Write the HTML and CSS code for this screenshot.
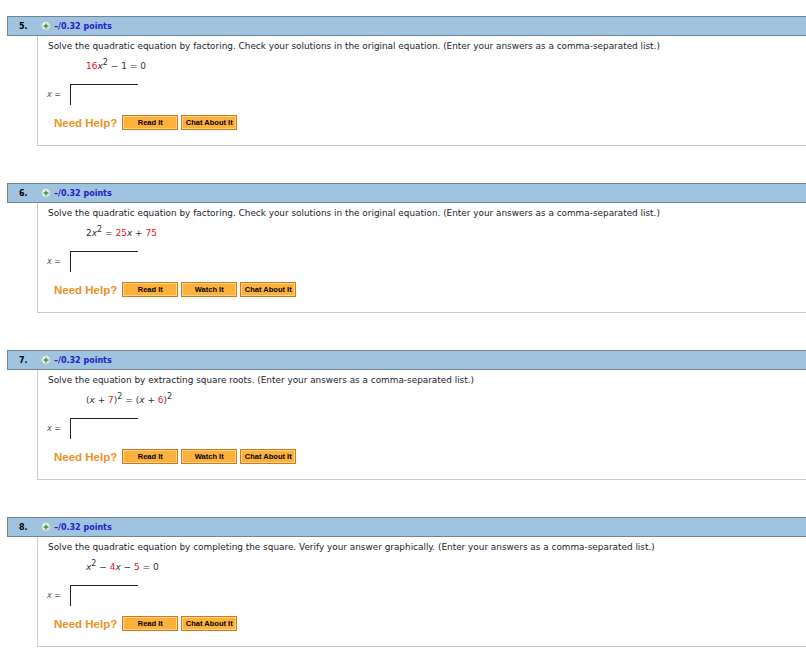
FILE: index.html
```html
<!DOCTYPE html>
<html>
<head>
<meta charset="utf-8">
<link rel="stylesheet" href="styles.css">
</head>
<body>
<div class="page">

  <div class="q">
    <div class="qhead">
      <span class="num">5.</span>
      <svg class="plus" viewBox="0 0 10 10" width="10" height="10"><defs><radialGradient id="g1" cx="40%" cy="35%" r="70%"><stop offset="0" stop-color="#ffffff"/><stop offset="1" stop-color="#cfd3d6"/></radialGradient></defs><circle cx="5" cy="5" r="4.5" fill="url(#g1)" stroke="#b7bcc0" stroke-width="0.6"/><path d="M5 2.6V7.4M2.6 5H7.4" stroke="#2b9a2b" stroke-width="1.4"/></svg>
      <span class="pts">–/0.32 points</span>
    </div>
    <div class="qbody">
      <p class="prompt">Solve the quadratic equation by factoring. Check your solutions in the original equation. (Enter your answers as a comma-separated list.)</p>
      <div class="eq"><span class="c">16</span><i>x</i><sup>2</sup> − 1 = 0</div>
      <div class="answer"><span class="lbl"><i>x</i> =</span><span class="field"></span></div>
      <div class="help"><span class="need">Need Help?</span><span class="btn">Read It</span><span class="btn">Chat About It</span></div>
    </div>
  </div>

  <div class="q">
    <div class="qhead">
      <span class="num">6.</span>
      <svg class="plus" viewBox="0 0 10 10" width="10" height="10"><circle cx="5" cy="5" r="4.5" fill="url(#g1)" stroke="#b7bcc0" stroke-width="0.6"/><path d="M5 2.6V7.4M2.6 5H7.4" stroke="#2b9a2b" stroke-width="1.4"/></svg>
      <span class="pts">–/0.32 points</span>
    </div>
    <div class="qbody">
      <p class="prompt">Solve the quadratic equation by factoring. Check your solutions in the original equation. (Enter your answers as a comma-separated list.)</p>
      <div class="eq">2<i>x</i><sup>2</sup> = <span class="c">25</span><i>x</i> + <span class="c">75</span></div>
      <div class="answer"><span class="lbl"><i>x</i> =</span><span class="field"></span></div>
      <div class="help"><span class="need">Need Help?</span><span class="btn">Read It</span><span class="btn">Watch It</span><span class="btn">Chat About It</span></div>
    </div>
  </div>

  <div class="q">
    <div class="qhead">
      <span class="num">7.</span>
      <svg class="plus" viewBox="0 0 10 10" width="10" height="10"><circle cx="5" cy="5" r="4.5" fill="url(#g1)" stroke="#b7bcc0" stroke-width="0.6"/><path d="M5 2.6V7.4M2.6 5H7.4" stroke="#2b9a2b" stroke-width="1.4"/></svg>
      <span class="pts">–/0.32 points</span>
    </div>
    <div class="qbody">
      <p class="prompt">Solve the equation by extracting square roots. (Enter your answers as a comma-separated list.)</p>
      <div class="eq">(<i>x</i> + <span class="c">7</span>)<sup>2</sup> = (<i>x</i> + <span class="c">6</span>)<sup>2</sup></div>
      <div class="answer"><span class="lbl"><i>x</i> =</span><span class="field"></span></div>
      <div class="help"><span class="need">Need Help?</span><span class="btn">Read It</span><span class="btn">Watch It</span><span class="btn">Chat About It</span></div>
    </div>
  </div>

  <div class="q">
    <div class="qhead">
      <span class="num">8.</span>
      <svg class="plus" viewBox="0 0 10 10" width="10" height="10"><circle cx="5" cy="5" r="4.5" fill="url(#g1)" stroke="#b7bcc0" stroke-width="0.6"/><path d="M5 2.6V7.4M2.6 5H7.4" stroke="#2b9a2b" stroke-width="1.4"/></svg>
      <span class="pts">–/0.32 points</span>
    </div>
    <div class="qbody">
      <p class="prompt">Solve the quadratic equation by completing the square. Verify your answer graphically. (Enter your answers as a comma-separated list.)</p>
      <div class="eq"><i>x</i><sup>2</sup> − <span class="c">4</span><i>x</i> − <span class="c">5</span> = 0</div>
      <div class="answer"><span class="lbl"><i>x</i> =</span><span class="field"></span></div>
      <div class="help"><span class="need">Need Help?</span><span class="btn">Read It</span><span class="btn">Chat About It</span></div>
    </div>
  </div>

</div>
</body>
</html>
```

FILE: styles.css
```css
html, body {
  margin: 0;
  padding: 0;
  background: #ffffff;
  overflow: hidden;
}

.page {
  padding-top: 16px;
  font-family: "DejaVu Sans", Verdana, sans-serif;
  color: #1a1a1a;
}

.q {
  margin-left: 7px;
  margin-bottom: 37px;
}

.qhead {
  height: 18px;
  border: 1px solid #6f8596;
  border-right: none;
  background: #a0c3e0;
  display: flex;
  align-items: center;
}

.num {
  width: 22px;
  margin-left: 11px;
  font-size: 8px;
  font-weight: bold;
  color: #000;
}

.plus {
  display: block;
  margin-right: 3px;
}

.pts {
  font-size: 8px;
  font-weight: bold;
  color: #2020c8;
}

.qbody {
  margin-left: 30px;
  height: 109px;
  border-left: 1px solid #cccccc;
  border-bottom: 1px solid #c8c8c8;
  padding-left: 10px;
}

.prompt {
  margin: 0;
  padding-top: 4px;
  font-size: 8.9px;
  line-height: 12px;
  color: #1c1c2a;
  white-space: nowrap;
}

.eq {
  margin-top: 7px;
  margin-left: 38px;
  font-size: 9px;
  line-height: 14px;
  color: #333;
}

.eq i {
  font-style: italic;
}

.eq sup {
  font-size: 8px;
  line-height: 0;
  vertical-align: 4px;
}

.eq .c {
  color: #e3141c;
}

.answer {
  margin-top: 10px;
  display: flex;
  align-items: center;
  height: 22px;
}

.lbl {
  width: 23px;
  margin-left: -1px;
  font-size: 8px;
  color: #555;
}

.field {
  display: block;
  width: 68px;
  height: 21px;
  border-top: 1px solid #222;
  border-left: 1px solid #222;
  box-sizing: border-box;
}

.help {
  margin-top: 10px;
  display: flex;
  align-items: center;
  height: 15px;
}

.need {
  margin-left: 6px;
  margin-right: 5px;
  font-family: "Liberation Sans", Arial, sans-serif;
  font-size: 11.5px;
  font-weight: bold;
  color: #f0901e;
}

.btn {
  box-sizing: border-box;
  width: 56px;
  height: 15px;
  margin-right: 3px;
  border: 1px solid #cf7a22;
  box-shadow: inset 0 0 0 1px #ffd27e;
  background: #fbb13c;
  font-family: "Liberation Sans", Arial, sans-serif;
  font-size: 7.5px;
  font-weight: bold;
  color: #000;
  display: flex;
  align-items: center;
  justify-content: center;
}
```
